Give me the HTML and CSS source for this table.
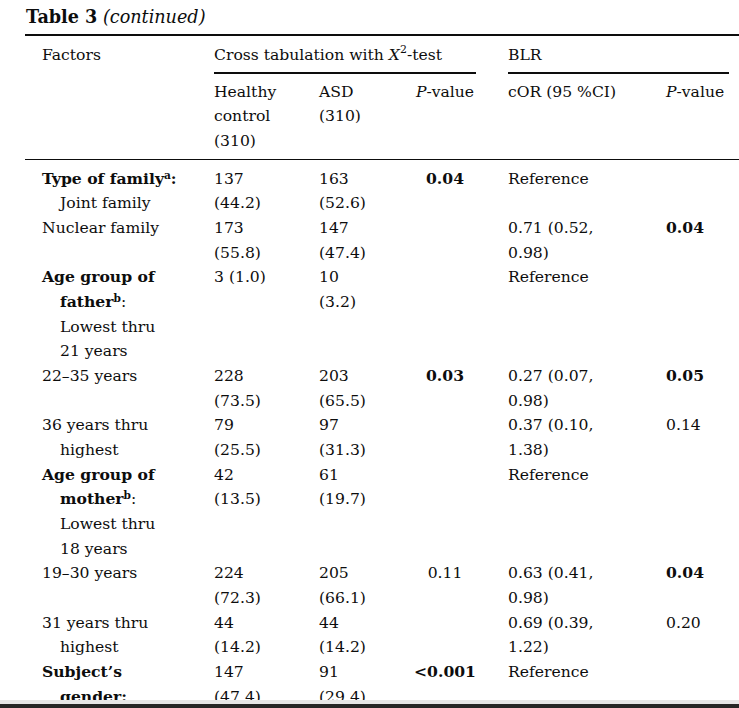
FILE: index.html
```html
<!DOCTYPE html>
<html lang="en">
<head>
<meta charset="utf-8">
<title>Table 3 (continued)</title>
<link rel="stylesheet" href="styles.css">
</head>
<body>
<div class="viewport">
  <div class="page">
    <p class="caption"><b>Table 3</b> <i>(continued)</i></p>
    <table class="data">
      <colgroup>
        <col class="w-factor">
        <col class="w-healthy">
        <col class="w-asd">
        <col class="w-p1">
        <col class="w-cor">
        <col class="w-p2">
      </colgroup>
      <thead>
        <tr class="hrow1">
          <th rowspan="2" class="factor">Factors</th>
          <th colspan="3"><div class="group">Cross tabulation with <i>X</i><sup class="sq">2</sup>-test</div></th>
          <th colspan="2"><div class="group blr">BLR</div></th>
        </tr>
        <tr class="hrow2">
          <th>Healthy<br>control<br>(310)</th>
          <th>ASD<br>(310)</th>
          <th class="mid"><i>P</i>-value</th>
          <th class="cor">cOR (95 %CI)</th>
          <th><i>P</i>-value</th>
        </tr>
      </thead>
      <tbody>
        <tr class="first">
          <td class="factor"><b>Type of family<sup>a</sup>:</b><br>Joint family</td>
          <td>137<br>(44.2)</td>
          <td>163<br>(52.6)</td>
          <td class="mid"><b>0.04</b></td>
          <td class="cor">Reference</td>
          <td></td>
        </tr>
        <tr>
          <td class="factor">Nuclear family</td>
          <td>173<br>(55.8)</td>
          <td>147<br>(47.4)</td>
          <td class="mid"></td>
          <td class="cor">0.71 (0.52,<br>0.98)</td>
          <td><b>0.04</b></td>
        </tr>
        <tr>
          <td class="factor"><b>Age group of<br>father<sup>b</sup></b>:<br>Lowest thru<br>21 years</td>
          <td>3 (1.0)</td>
          <td>10<br>(3.2)</td>
          <td class="mid"></td>
          <td class="cor">Reference</td>
          <td></td>
        </tr>
        <tr>
          <td class="factor">22–35 years</td>
          <td>228<br>(73.5)</td>
          <td>203<br>(65.5)</td>
          <td class="mid"><b>0.03</b></td>
          <td class="cor">0.27 (0.07,<br>0.98)</td>
          <td><b>0.05</b></td>
        </tr>
        <tr>
          <td class="factor">36 years thru<br>highest</td>
          <td>79<br>(25.5)</td>
          <td>97<br>(31.3)</td>
          <td class="mid"></td>
          <td class="cor">0.37 (0.10,<br>1.38)</td>
          <td>0.14</td>
        </tr>
        <tr>
          <td class="factor"><b>Age group of<br>mother<sup>b</sup></b>:<br>Lowest thru<br>18 years</td>
          <td>42<br>(13.5)</td>
          <td>61<br>(19.7)</td>
          <td class="mid"></td>
          <td class="cor">Reference</td>
          <td></td>
        </tr>
        <tr>
          <td class="factor">19–30 years</td>
          <td>224<br>(72.3)</td>
          <td>205<br>(66.1)</td>
          <td class="mid">0.11</td>
          <td class="cor">0.63 (0.41,<br>0.98)</td>
          <td><b>0.04</b></td>
        </tr>
        <tr>
          <td class="factor">31 years thru<br>highest</td>
          <td>44<br>(14.2)</td>
          <td>44<br>(14.2)</td>
          <td class="mid"></td>
          <td class="cor">0.69 (0.39,<br>1.22)</td>
          <td>0.20</td>
        </tr>
        <tr>
          <td class="factor"><b>Subject’s<br>gender:</b></td>
          <td>147<br>(47.4)</td>
          <td>91<br>(29.4)</td>
          <td class="mid"><b>&lt;0.001</b></td>
          <td class="cor">Reference</td>
          <td></td>
        </tr>
      </tbody>
    </table>
  </div>
</div>
<div class="bottom-bar"></div>
</body>
</html>
```
FILE: styles.css
```css
html, body {
  margin: 0;
  padding: 0;
  background: #ffffff;
}

body {
  font-family: "DejaVu Serif", serif;
  color: #0d0d0d;
  width: 739px;
  height: 708px;
  overflow: hidden;
}

.viewport {
  height: 700px;
  overflow: hidden;
}

.page {
  padding-left: 25px;
}

.caption {
  margin: 0;
  box-sizing: border-box;
  height: 34px;
  padding-top: 5px;
  padding-left: 1px;
  font-size: 17.6px;
  line-height: 24px;
  white-space: nowrap;
}

.caption i {
  font-weight: normal;
}

.data {
  border-collapse: collapse;
  table-layout: fixed;
  width: 714px;
  font-size: 15.6px;
  line-height: 24.67px;
  border-top: 2px solid #0d0d0d;
}

.w-factor { width: 189px; }
.w-healthy { width: 105px; }
.w-asd { width: 95px; }
.w-p1 { width: 62px; }
.w-cor { width: 190px; }
.w-p2 { width: 73px; }

.data th,
.data td {
  padding: 0;
  text-align: left;
  vertical-align: top;
  font-weight: normal;
  white-space: nowrap;
}

.data th.factor,
.data td.factor {
  padding-left: 35px;
  text-indent: -18px;
}

.data .mid {
  text-align: center;
}

.data .cor {
  padding-left: 32px;
}

.hrow1 th {
  padding-top: 7px;
}

.hrow1 .group {
  padding-bottom: 4px;
  border-bottom: 2px solid #0d0d0d;
}

.hrow1 .group.blr {
  margin-left: 32px;
  margin-right: 10px;
}

.hrow2 th {
  padding-top: 6px;
  padding-bottom: 5px;
  border-bottom: 1px solid #0d0d0d;
}

.data thead th.factor {
  border-bottom: 1px solid #0d0d0d;
}

.first td {
  padding-top: 7px;
}

.data sup {
  font-size: 0.68em;
  line-height: 0;
  vertical-align: 0.5em;
}

.data sup.sq {
  font-size: 0.7em;
  vertical-align: 0.6em;
}

.bottom-bar {
  box-sizing: border-box;
  height: 8px;
  border-top: 4px solid #e6e6e6;
  background: #262626;
}
```
